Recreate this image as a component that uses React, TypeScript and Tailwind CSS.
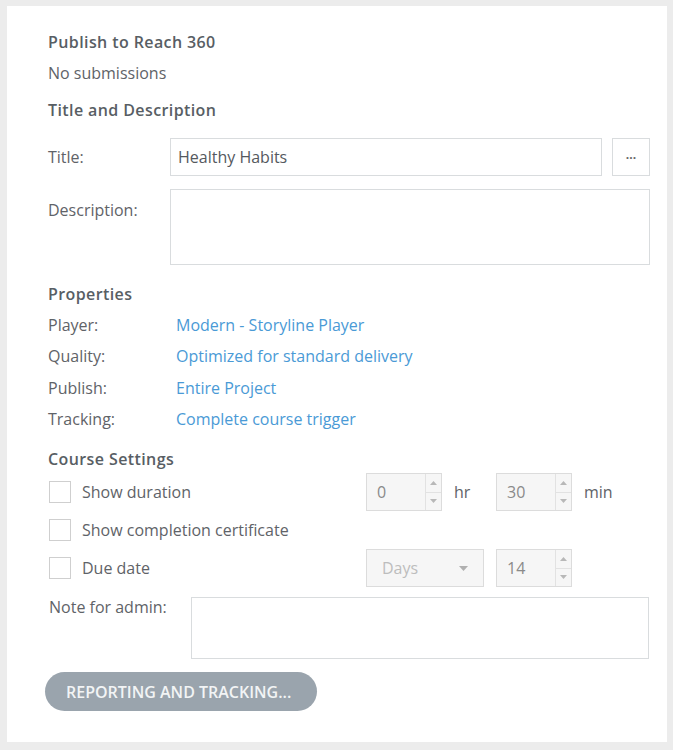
import React from "react";

const labelCls = "text-[16px] leading-5 text-[#5f6368]";
const headCls = "text-[16px] leading-5 font-semibold tracking-[0.4px] text-[#585e64]";

function Spinner({ value }: { value: string }) {
  return (
    <div className="flex h-[38px] w-[76px] border border-[#dcdcdc] bg-[#f6f6f6]">
      <div className="flex flex-1 items-center pl-[10px] text-[16px] text-[#8a8a8a]">{value}</div>
      <div className="flex w-[16px] flex-col border-l border-[#e2e2e2]">
        <div className="flex flex-1 items-center justify-center border-b border-[#e2e2e2]">
          <svg width="7" height="4" viewBox="0 0 7 4">
            <path d="M0 4 L3.5 0 L7 4 Z" fill="#b8b8b8" />
          </svg>
        </div>
        <div className="flex flex-1 items-center justify-center">
          <svg width="7" height="4" viewBox="0 0 7 4">
            <path d="M0 0 L3.5 4 L7 0 Z" fill="#b8b8b8" />
          </svg>
        </div>
      </div>
    </div>
  );
}

function CheckRow({ label, children }: { label: string; children?: React.ReactNode }) {
  return (
    <div className="flex h-[38px] items-center">
      <div className="flex w-[318px] items-center">
        <span className="ml-[1px] h-[22px] w-[22px] border border-[#cfcfcf] bg-white" />
        <span className={`${labelCls} ml-[11px]`}>{label}</span>
      </div>
      {children}
    </div>
  );
}

export default function App() {
  const props = [
    { k: "Player:", v: "Modern - Storyline Player" },
    { k: "Quality:", v: "Optimized for standard delivery" },
    { k: "Publish:", v: "Entire Project" },
    { k: "Tracking:", v: "Complete course trigger" },
  ];

  return (
    <div
      className="h-[750px] w-[673px] bg-[#ececec] pb-[8px] pl-[7px] pr-[6px] pt-[6px]"
      style={{ fontFamily: '"Open Sans", "Noto Sans", sans-serif' }}
    >
      <div className="flex h-full flex-col bg-white pl-[41px] pr-[17px] pt-[26px]">
        <div className={headCls}>Publish to Reach 360</div>
        <div className={`${labelCls} mt-[11px]`}>No submissions</div>
        <div className={`${headCls} mt-[17px]`}>Title and Description</div>

        {/* Title */}
        <div className="mt-[18px] flex items-center">
          <div className={`${labelCls} w-[122px]`}>Title:</div>
          <div className="flex h-[38px] flex-1 items-center border border-[#d9dcde] pl-[7px] text-[16px] text-[#55595e]">
            Healthy Habits
          </div>
          <div className="ml-[10px] flex h-[38px] w-[38px] items-center justify-center border border-[#d9dcde] pb-[4px] text-[12px] font-bold text-[#666]">
            ...
          </div>
        </div>

        {/* Description */}
        <div className="mt-[13px] flex">
          <div className={`${labelCls} w-[122px] pt-[11px]`}>Description:</div>
          <div className="h-[76px] flex-1 border border-[#d9dcde]" />
        </div>

        <div className={`${headCls} mt-[19px]`}>Properties</div>
        <div className="mt-[5px] flex flex-col">
          {props.map((p) => (
            <div key={p.k} className="flex h-[31.5px] items-center">
              <div className={`${labelCls} w-[128px]`}>{p.k}</div>
              <div className="text-[16px] leading-5 text-[#4a9ad6]">{p.v}</div>
            </div>
          ))}
        </div>

        <div className={`${headCls} mt-[14px]`}>Course Settings</div>
        <div className="mt-[4px] flex flex-col">
          <CheckRow label="Show duration">
            <Spinner value="0" />
            <span className={`${labelCls} w-[54px] pl-[12px]`}>hr</span>
            <Spinner value="30" />
            <span className={`${labelCls} pl-[12px]`}>min</span>
          </CheckRow>
          <CheckRow label="Show completion certificate" />
          <CheckRow label="Due date">
            <div className="flex h-[38px] w-[118px] items-center justify-between border border-[#dcdcdc] bg-[#f6f6f6] pl-[15px] pr-[15px] text-[16px] text-[#bdbdbd]">
              <span>Days</span>
              <svg width="9" height="5" viewBox="0 0 9 5">
                <path d="M0 0 L4.5 5 L9 0 Z" fill="#b0b0b0" />
              </svg>
            </div>
            <div className="ml-[12px]">
              <Spinner value="14" />
            </div>
          </CheckRow>
        </div>

        {/* Note for admin */}
        <div className="mt-[10px] flex">
          <div className={`${labelCls} w-[143px] pl-[1px]`}>Note for admin:</div>
          <div className="mr-[1px] h-[62px] flex-1 border border-[#d9dcde]" />
        </div>

        <div className="-ml-[3px] mt-[13px]">
          <button className="flex h-[39px] w-[272px] items-center rounded-full bg-[#9aa4ad] pl-[21px] text-[16px] font-semibold text-[#f2f4f5]">
            REPORTING AND TRACKING...
          </button>
        </div>
      </div>
    </div>
  );
}
